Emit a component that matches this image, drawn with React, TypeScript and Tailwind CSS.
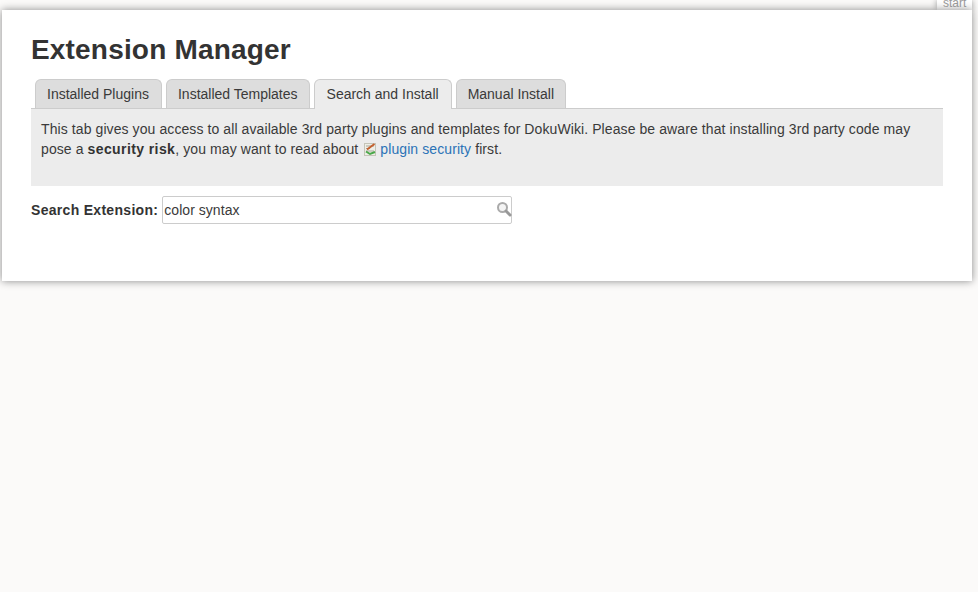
import React from 'react';

const tabs = [
  { label: 'Installed Plugins', className: 'h-[29px] bg-[#dddddd] pl-[11px] pr-[12px]' },
  { label: 'Installed Templates', className: 'h-[29px] bg-[#dddddd] px-[11px]' },
  { label: 'Search and Install', className: 'h-[30px] bg-[#ececec] px-[12px]' },
  { label: 'Manual Install', className: 'h-[29px] bg-[#dddddd] px-[11px]' }
];

const PluginIcon = () => (
  <svg className="ml-[1px] mr-[3px] inline-block align-[-2px]" height="14" viewBox="0 0 14 14" width="14">
    <rect fill="#eeeee6" height="12" stroke="#c4c4b8" width="11" x="1.5" y="1.5" />
    <path d="M3 4h8M3 6.5h4M3 9h8" stroke="#a8a89c" strokeWidth="1" />
    <path d="M4 7.5 11.5 2" stroke="#c4602f" strokeWidth="2" />
    <path d="M3 9.5 7 12l5-2" fill="none" stroke="#4aa84a" strokeWidth="2" />
  </svg>
);

const SearchIcon = () => (
  <svg className="mb-[1px] mr-[-1px]" height="16" viewBox="0 0 16 16" width="16">
    <circle cx="6.5" cy="6.5" fill="#f4f4f4" r="4.5" stroke="#aaaaaa" strokeWidth="2" />
    <path d="M10 10l4 4" stroke="#999999" strokeLinecap="round" strokeWidth="3" />
  </svg>
);

export default function App() {
  return (
    <div className="flex h-[592px] w-full flex-col overflow-hidden bg-[#fbfaf9] font-['Liberation_Sans',Arial,sans-serif] text-[14px] leading-[20px] text-[#3a3a3a]">
      <div className="flex h-[10px] w-[972px] justify-end">
        <div className="h-[10px] w-[35px] overflow-hidden bg-white pl-[6px] text-[12px] leading-[6px] text-[#999999] shadow-[0_0_6px_#999999]">
          start
        </div>
      </div>
      <div className="z-10 ml-[2px] h-[271px] w-[970px] bg-white pl-[29px] pr-[29px] pt-[23px] shadow-[0_0_8px_#888888]">
        <h1 className="text-[28px] font-bold leading-[34px] tracking-[0.18px] text-[#333333]">Extension Manager</h1>
        <div className="mt-[12px] flex h-[30px] gap-[4px] border-b border-[#cccccc] pl-[4px]">
          {tabs.map((tab) => (
            <div
              className={`rounded-t-[6px] border border-b-0 border-[#cccccc] pt-[4px] ${tab.className}`}
              key={tab.label}
            >
              {tab.label}
            </div>
          ))}
        </div>
        <div className="h-[77px] bg-[#ececec] px-[10px] pt-[10px] tracking-[0.09px]">
          This tab gives you access to all available 3rd party plugins and templates for DokuWiki. Please be aware that installing 3rd party code may pose a <strong className="font-bold tracking-[0.4px] text-[#333333]">security risk</strong>, you may want to read about <PluginIcon /><a className="text-[#2b73b7]" href="#">plugin security</a> first.
        </div>
        <div className="mt-[10px] flex items-center gap-[4px]">
          <label className="font-bold tracking-[0.3px] text-[#333333]">Search Extension:</label>
          <div className="flex h-[28px] w-[350px] items-center justify-between rounded-[2px] border border-[#cccccc] pb-[1px] pl-[1px] tracking-[0.045px]">
            <span>color syntax</span>
            <SearchIcon />
          </div>
        </div>
      </div>
    </div>
  );
}
